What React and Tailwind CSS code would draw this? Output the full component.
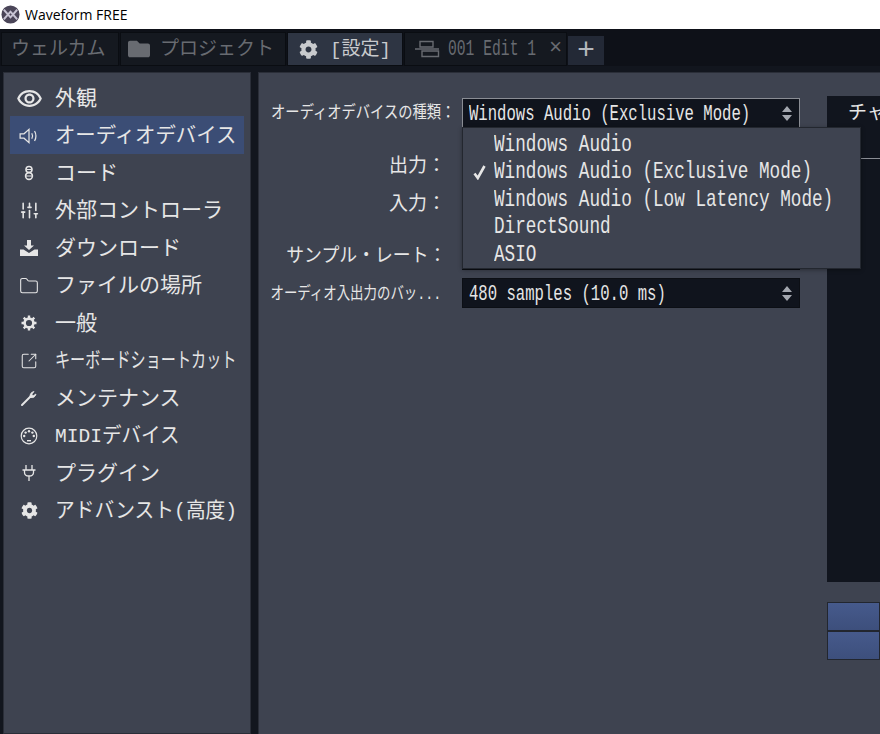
import React from 'react';
import { FaCog, FaFolder } from 'react-icons/fa';
import { LuFolder, LuSlidersVertical, LuSquareArrowOutUpRight } from 'react-icons/lu';
import { MdOutlineRemoveRedEye } from 'react-icons/md';

const font = 'font-["Liberation_Mono","Noto_Sans_CJK_JP",monospace]';

const Logo = () => (
    <svg width="19" height="19" viewBox="0 0 20 20" className="ml-[1px]">
        <circle cx="10" cy="10" r="9.5" fill="#4a4558" />
        <path d="M3 5 L10 13 L17 5 M3 15 L10 7 L17 15" fill="none" stroke="#c8c4d4" strokeWidth="2" />
    </svg>
);

const Speaker = () => (
    <svg width="20" height="20" viewBox="0 0 18 18" fill="none" stroke="currentColor" strokeWidth="1.1">
        <path d="M1 7 H4.5 L9 3 V15 L4.5 11 H1 Z" />
        <path d="M11.5 6.5 Q13 9 11.5 11.5 M14 4.5 Q16.5 9 14 13.5" />
    </svg>
);

const Code = () => (
    <svg width="18" height="18" viewBox="0 0 18 18" fill="none" stroke="currentColor" strokeWidth="1.6">
        <circle cx="9" cy="5.5" r="3" />
        <circle cx="9" cy="12" r="3.4" />
        <path d="M6 12 H12 M6.5 5.5 H11.5" strokeWidth="1" />
    </svg>
);

const Download = () => (
    <svg width="18" height="18" viewBox="0 0 18 18" fill="currentColor">
        <path d="M7 1 H11 V6.5 H14 L9 11 L4 6.5 H7 Z" />
        <path d="M0 10.5 H3.5 L9 14 L14.5 10.5 H18 V17 H0 Z" />
    </svg>
);

const Midi = () => (
    <svg width="18" height="18" viewBox="0 0 18 18" fill="currentColor">
        <circle cx="9" cy="9" r="7.8" fill="none" stroke="currentColor" strokeWidth="1.2" />
        <circle cx="4.2" cy="9" r="1.2" />
        <circle cx="5.6" cy="5.6" r="1.2" />
        <circle cx="9" cy="4.2" r="1.2" />
        <circle cx="12.4" cy="5.6" r="1.2" />
        <circle cx="13.8" cy="9" r="1.2" />
        <rect x="7" y="13" width="4" height="1.4" />
    </svg>
);

const Plug = () => (
    <svg width="18" height="18" viewBox="0 0 18 18" fill="none" stroke="currentColor" strokeWidth="1.3">
        <path d="M6 1 V6 M12 1 V6 M2.5 6 H15.5 M4.5 6 V8.5 Q4.5 12 9 12 Q13.5 12 13.5 8.5 V6 M9 12 V17" />
    </svg>
);

const Wrench = () => (
    <svg width="18" height="18" viewBox="0 0 18 18" fill="none" stroke="currentColor" strokeLinecap="round">
        <path d="M2 16 L10.5 7.5" strokeWidth="2" />
        <path d="M10 8 Q9.5 3.5 14 2.5 L11.8 5.2 L13.2 6.8 L16 5 Q15 9.5 10.5 8.5" fill="currentColor" strokeWidth="0.8" />
    </svg>
);

const OutlineGear = () => (
    <svg width="18" height="18" viewBox="0 0 18 18" fill="none" stroke="currentColor">
        <circle cx="9" cy="9" r="4.4" strokeWidth="2.6" />
        <path d="M9 1.5 V4 M9 14 V16.5 M1.5 9 H4 M14 9 H16.5 M3.7 3.7 L5.5 5.5 M12.5 12.5 L14.3 14.3 M14.3 3.7 L12.5 5.5 M5.5 12.5 L3.7 14.3" strokeWidth="2.4" />
    </svg>
);

const TabGlyph = () => (
    <svg width="26" height="18" viewBox="0 0 26 18" fill="none" stroke="currentColor" strokeWidth="1.4" className="ml-[9px] shrink-0">
        <path d="M6 1.5 H19 V7 H6 Z M1 9 H25 M8 11 H24.5 V16.5 H8 Z" />
    </svg>
);

const Spinner = () => (
    <svg width="10" height="15" viewBox="0 0 10 15" fill="#a3a7af" className="shrink-0">
        <path d="M5 0 L10 6 H0 Z M0 9 H10 L5 15 Z" />
    </svg>
);

const Check = () => (
    <svg width="13" height="15" viewBox="0 0 13 15" fill="none" stroke="#e6e6e6" strokeWidth="2.6" className="absolute left-[10px]">
        <path d="M1.5 8.5 L4.8 13 L11.5 1" />
    </svg>
);

const navItems = [
    { icon: <MdOutlineRemoveRedEye size={27} />, label: '外観', top: 'h-[37px]' },
    { icon: <Speaker />, label: 'オーディオデバイス', active: true, top: 'h-[38px]', text: 'scale-x-[0.97]' },
    { icon: <Code />, label: 'コード', top: 'h-[37px]' },
    { icon: <LuSlidersVertical size={19} />, label: '外部コントローラ', top: 'h-[38px]' },
    { icon: <Download />, label: 'ダウンロード', top: 'h-[37px]' },
    { icon: <LuFolder size={20} strokeWidth={1.3} />, label: 'ファイルの場所', top: 'h-[38px]' },
    { icon: <OutlineGear />, label: '一般', top: 'h-[37px]' },
    { icon: <LuSquareArrowOutUpRight size={18} strokeWidth={1.4} />, label: 'キーボードショートカット', top: 'h-[38px]', text: 'scale-x-[0.72]' },
    { icon: <Wrench />, label: 'メンテナンス', top: 'h-[37px]' },
    { icon: <Midi />, label: 'MIDIデバイス', top: 'h-[38px]', text: 'scale-x-[0.93]' },
    { icon: <Plug />, label: 'プラグイン', top: 'h-[37px]' },
    { icon: <FaCog size={17} />, label: 'アドバンスト(高度)', top: 'h-[38px]', text: 'scale-x-[0.94]' },
];

const Tab = ({ width, active, children }) => (
    <div className={`flex items-center h-[34px] border border-[#0a0d12] ${width} ${active ? 'bg-[#2e3543] text-[#c8cacd]' : 'bg-[#151920] text-[#686b71]'}`}>
        {children}
    </div>
);

const SelectBox = ({ children, light }) => (
    <div className={`flex items-center justify-between w-[338px] h-[30px] pl-[6px] pr-[7px] bg-[#10141d] border ${light ? 'border-[#8a8d94]' : 'border-[#0c0f15]'}`}>
        <span className="inline-block w-0 grow pt-[3px] whitespace-nowrap text-[22px] leading-none text-[#e6e6e6] origin-left scale-x-[0.71]">{children}</span>
        <Spinner />
    </div>
);

const FormRow = ({ label, labelClass, height, children }) => (
    <div className={`flex items-center ${height}`}>
        <div className="flex justify-end w-[173px] shrink-0">
            <span className={`inline-block whitespace-nowrap leading-none text-[#e6e6e6] origin-right ${labelClass}`}>{label}</span>
        </div>
        <div className="ml-[21px]">{children}</div>
    </div>
);

const menuItems = ['Windows Audio', 'Windows Audio (Exclusive Mode)', 'Windows Audio (Low Latency Mode)', 'DirectSound', 'ASIO'];

const App = () => {
    return (
        <div className={`w-[880px] h-[734px] overflow-hidden flex flex-col bg-[#12161e] ${font}`}>
            {/* Title bar */}
            <div className="flex items-center gap-[5px] h-[29px] shrink-0 bg-white pb-[1px]">
                <Logo />
                <span className="font-['Open_Sans','Liberation_Sans',sans-serif] text-[14px] text-black">Waveform FREE</span>
            </div>

            {/* Tabs */}
            <div className="flex items-end gap-[1px] h-[37px] shrink-0 pl-[1px] bg-[#0e1118]">
                <Tab width="w-[118px]">
                    <span className="ml-[9px] pt-[2px] text-[19px] leading-none whitespace-nowrap">ウェルカム</span>
                </Tab>
                <Tab width="w-[166px]">
                    <FaFolder size={22} className="ml-[7px]" />
                    <span className="ml-[10px] pt-[2px] text-[19px] leading-none whitespace-nowrap">プロジェクト</span>
                </Tab>
                <Tab width="w-[116px]" active>
                    <FaCog size={19} className="ml-[11px]" />
                    <span className="ml-[12px] pt-[2px] text-[19px] leading-none whitespace-nowrap">[設定]</span>
                </Tab>
                <Tab width="w-[163px]">
                    <TabGlyph />
                    <span className="inline-block ml-[8px] w-[88px] shrink-0 pt-[2px] text-[22px] leading-none whitespace-nowrap origin-left scale-x-[0.667]">001 Edit 1</span>
                    <span className="ml-[13px] text-[22px] leading-none">×</span>
                </Tab>
                <div className="flex items-center justify-center w-[36px] h-[29px] mb-[1px] bg-[#232936] text-[#b4b7bc] text-[30px] font-light leading-none">+</div>
            </div>

            {/* Content */}
            <div className="flex flex-1 min-h-0 gap-[7px] pt-[6px] pl-[3px]">
                {/* Sidebar */}
                <div className="w-[248px] shrink-0 bg-[#3e4350] border border-[#2a2e38] pt-[6px] px-[6px]">
                    {navItems.map((item) => (
                        <div key={item.label} className={`flex items-center ${item.top} ${item.active ? 'bg-[#3b4d75]' : ''} text-[#e6e6e6]`}>
                            <div className="flex items-center justify-center w-[38px] pt-[1px] shrink-0">{item.icon}</div>
                            <span className={`inline-block ml-[7px] pt-[3px] whitespace-nowrap text-[21px] leading-none origin-left ${item.text || ''}`}>{item.label}</span>
                        </div>
                    ))}
                </div>

                {/* Main panel */}
                <div className="relative flex flex-1 min-w-0 bg-[#3e4350] border-l border-t border-[#2a2e38] pt-[25px] pl-[9px]">
                    <div className="w-[541px] shrink-0">
                        <FormRow label="オーディオデバイスの種類：" labelClass="text-[17px] scale-x-[0.84] -mr-[14px]" height="h-[30px]">
                            <SelectBox light>Windows Audio (Exclusive Mode)</SelectBox>
                        </FormRow>
                        <FormRow label="出力：" labelClass="pt-[2px] text-[19px] -mr-[5px]" height="h-[38px] mt-[19px]">
                            <SelectBox> </SelectBox>
                        </FormRow>
                        <FormRow label="入力：" labelClass="pt-[2px] text-[19px] -mr-[5px]" height="h-[38px]">
                            <SelectBox> </SelectBox>
                        </FormRow>
                        <FormRow label="サンプル・レート：" labelClass="pt-[4px] text-[19px] scale-x-[0.94] -mr-[5px]" height="h-[38px] mt-[13px]">
                            <SelectBox> </SelectBox>
                        </FormRow>
                        <FormRow label="オーディオ入出力のバッ..." labelClass="pt-[2px] text-[17px] scale-x-[0.79]" height="h-[38px]">
                            <SelectBox>480 samples (10.0 ms)</SelectBox>
                        </FormRow>
                    </div>

                    {/* Right column */}
                    <div className="flex flex-col flex-1 min-w-0 ml-[18px]">
                        <div className="h-[486px] bg-[#11151e] -mt-[2px] pt-[9px] overflow-hidden">
                            <div className="pl-[21px] text-[#e6e6e6] text-[19px] leading-none whitespace-nowrap h-[53px]">チャ</div>
                            <div className="h-[1px] ml-[20px] bg-[#8a8d94]" />
                        </div>
                        <div className="h-[29px] mt-[20px] bg-gradient-to-b from-[#465a8c] to-[#3d4f7c] border border-[#22262f]" />
                        <div className="h-[29px] bg-gradient-to-b from-[#465a8c] to-[#3d4f7c] border border-[#22262f]" />
                    </div>

                    {/* Open dropdown */}
                    <div className="absolute left-[203px] top-[54px] w-[399px] h-[142px] pt-[3px] bg-[#3e4350] border border-[#23272f] shadow-[0_1px_4px_rgba(0,0,0,0.35)] text-[#e6e6e6]">
                        {menuItems.map((item) => (
                            <div key={item} className="relative h-[27.5px] pl-[31px] flex items-center">
                                {item === 'Windows Audio (Exclusive Mode)' && <Check />}
                                <span className="inline-block whitespace-nowrap text-[24px] leading-none origin-left scale-x-[0.736]">{item}</span>
                            </div>
                        ))}
                    </div>
                </div>
            </div>
        </div>
    );
};

export default App;
